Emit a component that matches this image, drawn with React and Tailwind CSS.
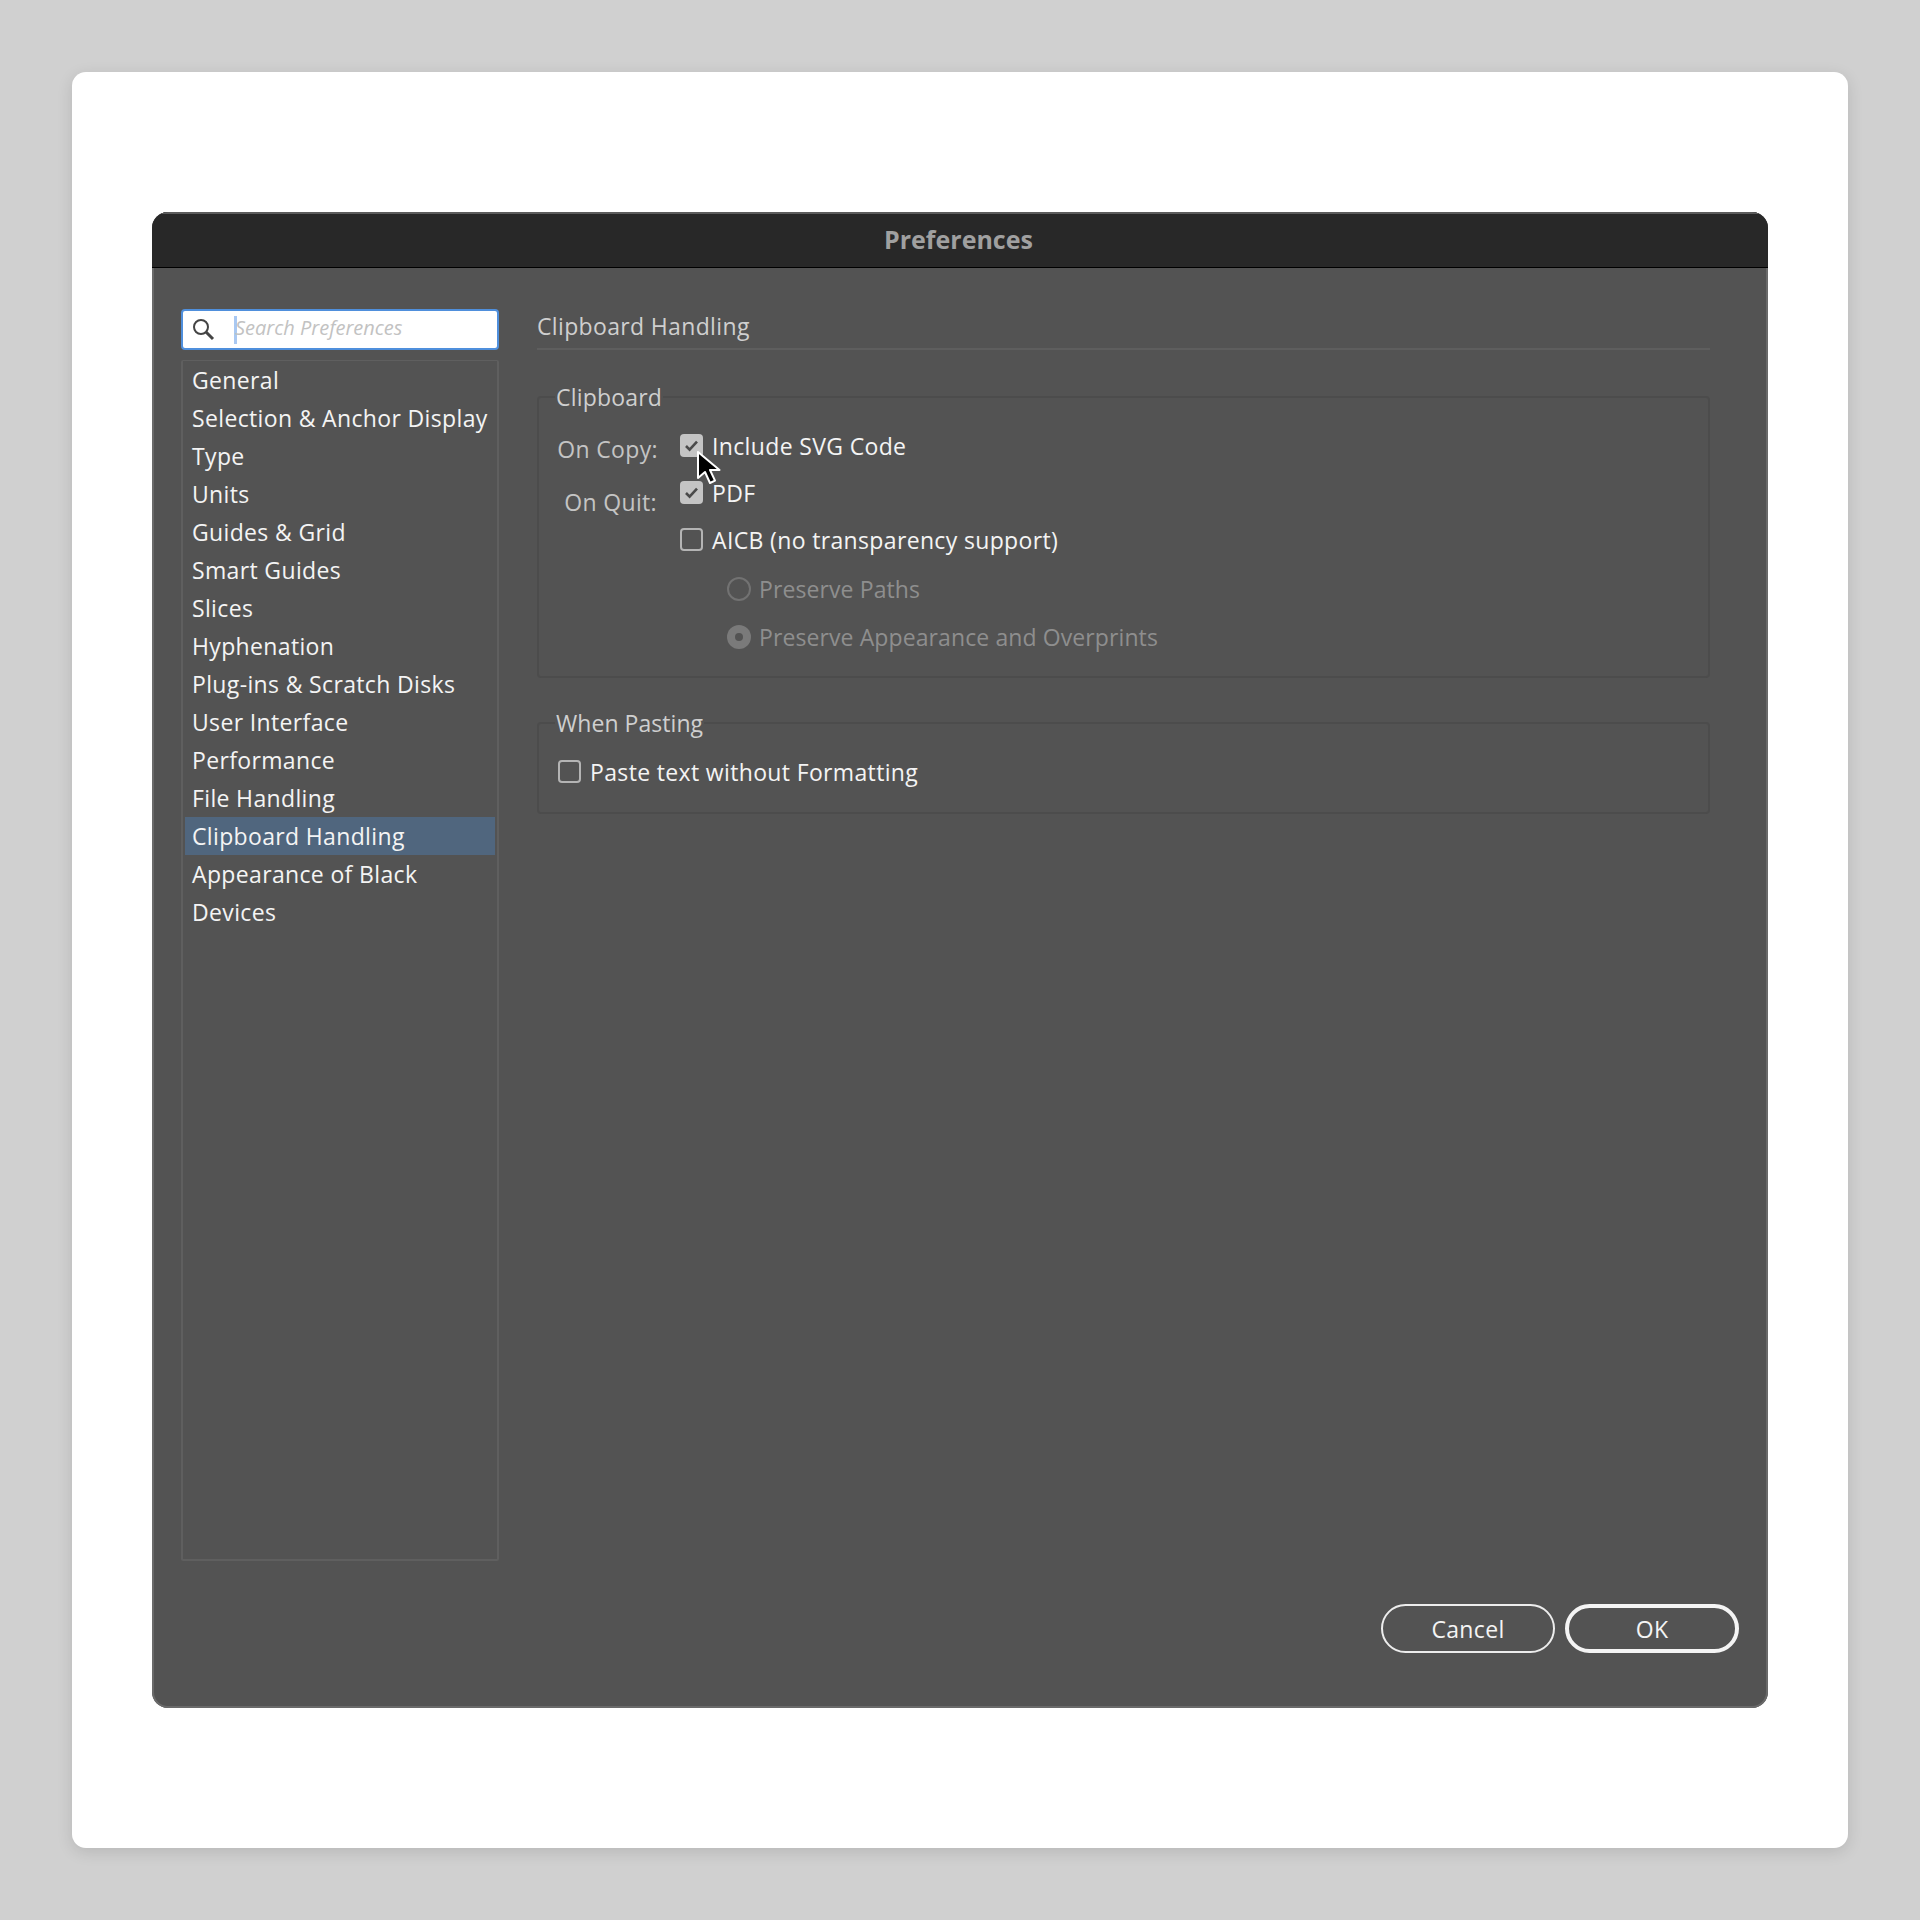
const categories = [
  "General",
  "Selection & Anchor Display",
  "Type",
  "Units",
  "Guides & Grid",
  "Smart Guides",
  "Slices",
  "Hyphenation",
  "Plug-ins & Scratch Disks",
  "User Interface",
  "Performance",
  "File Handling",
  "Clipboard Handling",
  "Appearance of Black",
  "Devices",
];

function CheckBox({ checked, label }) {
  return (
    <div className="flex h-[47px] items-center gap-[9px]">
      {checked ? (
        <span className="flex h-[23px] w-[23px] items-center justify-center rounded-[4px] bg-[#c4c4c4]">
          <svg width="15" height="13" viewBox="0 0 15 13" fill="none">
            <path d="M2 7l3.6 3.6L13 2.6" stroke="#4a4a4a" strokeWidth="2.6" />
          </svg>
        </span>
      ) : (
        <span className="h-[23px] w-[23px] rounded-[4px] border-2 border-[#b4b4b4]" />
      )}
      <span className="text-[#f4f4f4]">{label}</span>
    </div>
  );
}

function Radio({ checked, label }) {
  return (
    <div className="ml-[47px] flex h-[48px] items-center gap-[8px] tracking-[0.1px] text-[#8e8e8e]">
      {checked ? (
        <span className="flex h-[24px] w-[24px] items-center justify-center rounded-full bg-[#7a7a7a]">
          <span className="h-[8px] w-[8px] rounded-full bg-[#535353]" />
        </span>
      ) : (
        <span className="h-[24px] w-[24px] rounded-full border-2 border-[#727272]" />
      )}
      <span>{label}</span>
    </div>
  );
}

export default function App() {
  return (
    <div className="h-[1920px] bg-[#d0d0d0] p-[72px] font-['Open_Sans','Noto_Sans',sans-serif] text-[23px] leading-[38px] tracking-[0.35px]">
      <div className="h-[1776px] rounded-[14px] bg-white px-[80px] pt-[140px] shadow-[0_4px_16px_rgba(0,0,0,0.12)]">
        <div className="flex h-[1496px] w-[1616px] flex-col overflow-hidden rounded-[16px] bg-[#535353] shadow-[inset_0_0_0_2px_#6a6a6a]">
          <div className="flex h-[56px] shrink-0 items-center justify-center border-t-2 border-b border-t-[#5c5c5c] border-b-black bg-[#282828] pr-[3px] pb-[3px] text-[25px] font-bold tracking-normal text-[#a0a0a0]">
            Preferences
          </div>

          <div className="flex flex-1 px-[29px] pt-[41px]">
            {/* left column: search + category list */}
            <div className="w-[318px] shrink-0">
              <div className="flex h-[41px] items-center rounded-[4px] border-2 border-[#4f8fdc] bg-white pl-[9px]">
                <svg width="24" height="24" viewBox="0 0 24 24" fill="none" className="shrink-0">
                  <circle cx="9" cy="9" r="7" stroke="#444444" strokeWidth="2" />
                  <path d="M14 14l7 7" stroke="#444444" strokeWidth="3" />
                </svg>
                <span className="ml-[18px] h-[28px] w-[3px] shrink-0 bg-[#a9c8f2]" />
                <span className="-ml-[2px] pb-[3px] text-[20px] tracking-normal text-[#c2c2c2] italic">Search Preferences</span>
              </div>
              <div className="mt-[10px] h-[1201px] rounded-[2px] border-x-2 border-t border-b-2 border-[#5f5f5f] px-[2px]">
                {categories.map((name) => (
                  <div
                    key={name}
                    className={`h-[38px] pl-[7px] text-[#f4f4f4] ${name === "Clipboard Handling" ? "bg-[#50667e]" : ""}`}
                  >
                    {name}
                  </div>
                ))}
              </div>
            </div>

            {/* right column */}
            <div className="ml-[38px] w-[1173px]">
              <div className="h-[41px] border-b-2 border-[#5e5e5e] leading-[34px] text-[#cfcfcf]">Clipboard Handling</div>

              <fieldset className="relative mt-[28px] h-[300px] rounded-[4px] border-2 border-[#4c4c4c] px-[16px]">
                <legend className="px-[1px] tracking-[0.2px] text-[#cfcfcf]">Clipboard</legend>
                <div className="flex">
                  <div className="w-[104px] pr-[1px] text-right text-[#c4c4c4]">
                    <div className="mt-[14px] whitespace-nowrap">On Copy:</div>
                    <div className="mt-[15px] whitespace-nowrap pr-[1px]">On Quit:</div>
                  </div>
                  <div className="ml-[21px] mt-[6px]">
                    <CheckBox checked label="Include SVG Code" />
                    <CheckBox checked label="PDF" />
                    <CheckBox label="AICB (no transparency support)" />
                    <div className="mt-[2px]">
                      <Radio label="Preserve Paths" />
                      <Radio checked label="Preserve Appearance and Overprints" />
                    </div>
                  </div>
                </div>
                {/* mouse pointer */}
                <svg className="absolute left-[156px] top-[34px]" width="26" height="36" viewBox="0 0 26 36">
                  <path
                    d="M3 2v26l7-6 5 11 5-2.4-5-10.6h9.5z"
                    fill="#000000"
                    stroke="#ffffff"
                    strokeWidth="2"
                    strokeLinejoin="round"
                  />
                </svg>
              </fieldset>

              <fieldset className="mt-[26px] h-[110px] rounded-[4px] border-2 border-[#4c4c4c] px-[16px]">
                <legend className="px-[1px] tracking-[0.05px] text-[#cfcfcf]">When Pasting</legend>
                <div className="ml-[3px] mt-[6px]">
                  <CheckBox label="Paste text without Formatting" />
                </div>
              </fieldset>
            </div>
          </div>

          <div className="flex justify-end gap-[10px] pr-[29px] pb-[55px]">
            <button className="h-[49px] w-[174px] rounded-full border-2 border-[#ededed] text-[#f4f4f4]">Cancel</button>
            <button className="h-[49px] w-[174px] rounded-full border-4 border-[#f4f4f4] text-[#f4f4f4]">OK</button>
          </div>
        </div>
      </div>
    </div>
  );
}
